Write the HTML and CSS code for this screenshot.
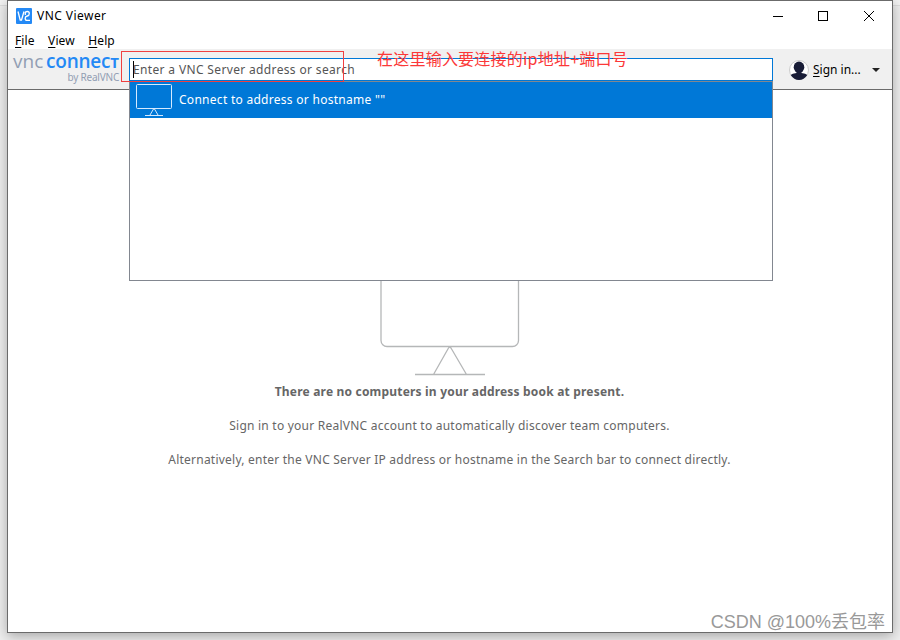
FILE: index.html
```html
<!DOCTYPE html>
<html lang="en">
  <head>
    <meta charset="UTF-8" />
    <title>VNC Viewer</title>
    <link rel="stylesheet" href="styles.css">
  </head>
  <body>
    <div class="window">
      <header class="titlebar">
        <svg class="app-icon" width="16" height="16" viewBox="0 0 16 16">
          <rect width="16" height="16" rx="1" fill="#2489f5" />
          <path d="M2 3.5L4.2 12H5.5L8 3.5M9.3 7V5Q9.3 3.5 11.3 3.5Q13.3 3.5 13.3 5.5Q13.3 7.5 11.3 8Q9.2 8.5 9.2 10.2Q9.2 12.4 11.2 12.4H14" fill="none" stroke="#fff" stroke-width="1.3" />
        </svg>
        <span class="title">VNC Viewer</span>
        <svg class="controls" width="104" height="12" viewBox="0 0 104 12" fill="none" stroke="#000">
          <path d="M0 6.5H10" />
          <rect x="45.5" y="1.5" width="9" height="9" />
          <path d="M91 1L101 11M101 1L91 11" />
        </svg>
      </header>
      <nav class="menu">
        <span class="file"><u>F</u>ile</span>
        <span class="view"><u>V</u>iew</span>
        <span class="help"><u>H</u>elp</span>
      </nav>

      <div class="toolbar">
        <div class="logo">
          <div class="brand"><span class="vnc">vnc</span><span class="connect">connec<span class="cap">T</span></span></div>
          <div class="by">by RealVNC</div>
        </div>
        <div class="search">
          <div class="field"><span class="caret"></span><span class="placeholder">Enter a VNC Server address or search</span></div>
          <div class="dropdown">
            <div class="option">
              <svg width="38" height="34" viewBox="0 0 38 34" fill="none" stroke="#d5eaff">
                <rect x="1.5" y="1.5" width="35" height="24" rx="1" />
                <path d="M15 32L18.5 26H19.5L23 32M10 32.5H28" />
              </svg>
              <span class="option-text">Connect to address or hostname ""</span>
            </div>
          </div>
          <div class="highlight"></div>
          <div class="note">在这里输入要连接的ip地址+端口号</div>
        </div>
        <div class="account">
          <svg width="20" height="20" viewBox="0 0 20 20">
            <circle cx="10" cy="10" r="9.5" fill="#fff" stroke="#ccc" />
            <ellipse cx="10" cy="7.2" rx="5.3" ry="5.7" fill="#181c36" />
            <path d="M7.5 11H12.5V13Q17 13.5 18.3 15Q15 20 10 20T1.7 15Q3 13.5 7.5 13Z" fill="#181c36" />
          </svg>
          <span class="signin"><u>S</u>ign in...</span>
          <svg class="arrow" width="8" height="4" viewBox="0 0 8 4"><path d="M0 0H8L4 4Z" fill="#222" /></svg>
        </div>
      </div>

      <main class="content">
        <svg width="140" height="106" viewBox="0 0 140 106" fill="none" stroke="#b5b7b8" stroke-width="1.3">
          <rect x="1" y="1" width="137.5" height="75.5" rx="6" />
          <path d="M53.5 104.5L68.5 78Q69.5 76 71 78L86.5 104.5M35 104.5H105" />
        </svg>
        <p class="empty">There are no computers in your address book at present.</p>
        <p class="line-team">Sign in to your RealVNC account to automatically discover team computers.</p>
        <p class="line-direct">Alternatively, enter the VNC Server IP address or hostname in the Search bar to connect directly.</p>
      </main>
    </div>
    <div class="watermark">CSDN @100%丢包率</div>
  </body>
</html>
```
FILE: styles.css
```css
* {
  box-sizing: border-box;
}

body {
  margin: 0;
  height: 640px;
  overflow: hidden;
  background: linear-gradient(#f3f3f3 5px, #ddd 5px, #ddd 6px, #eee 6px);
  font-family: "Noto Sans", "Noto Sans CJK SC", sans-serif;
  font-size: 12px;
  line-height: 18px;
  color: #000;
}

.window {
  display: flex;
  flex-direction: column;
  width: 886px;
  height: 633px;
  margin-left: 7px;
  background: #fff;
  border: 1px solid #6b6b6b;
  box-shadow: 0 3px 12px rgba(0, 0, 0, 0.3);
}

.titlebar {
  display: flex;
  align-items: center;
  height: 29px;
  padding: 0 15px 0 8px;
}

.title {
  margin-left: 5px;
  letter-spacing: 0.45px;
}

.controls {
  margin-left: auto;
}

.menu {
  display: flex;
  gap: 13.5px;
  height: 19px;
  padding: 2px 7px 0;
  letter-spacing: 0.1px;
}

u {
  text-underline-offset: 2px;
}

.toolbar {
  display: flex;
  height: 41px;
  background: #f0f0f0;
  border-bottom: 1px solid #6b6b6b;
}

.logo {
  width: 121px;
  padding: 2px 0 0 5px;
  white-space: nowrap;
}

.brand {
  height: 20px;
  font-family: "Open Sans", sans-serif;
  font-size: 19px;
  line-height: 20px;
}

.vnc {
  display: inline-block;
  width: 33px;
  color: #929eb3;
}

.connect {
  color: #2489f5;
  font-weight: 600;
  letter-spacing: -0.2px;
}

.cap {
  font-size: 15px;
  font-weight: 700;
}

.by {
  width: 106px;
  height: 12px;
  font-size: 10px;
  line-height: 12px;
  text-align: right;
  letter-spacing: -0.2px;
  color: #929eb3;
}

.search {
  position: relative;
  z-index: 1;
  width: 644px;
  margin-top: 9px;
}

.field {
  display: flex;
  align-items: center;
  height: 23px;
  padding-left: 3px;
  background: #fff;
  border: 1px solid #0078d7;
  color: #555;
}

.caret {
  width: 1px;
  height: 17px;
  margin-right: -1px;
  background: #000;
}

.placeholder {
  letter-spacing: 0.35px;
}

.dropdown {
  position: absolute;
  top: 23px;
  left: 0;
  width: 644px;
  height: 200px;
  background: #fff;
  border: 1px solid #828790;
}

.option {
  display: flex;
  align-items: center;
  height: 36px;
  padding-left: 5px;
  background: #0078d7;
  color: #fff;
}

.option-text {
  margin-left: 6px;
  letter-spacing: 0.28px;
}

.highlight {
  position: absolute;
  top: -7px;
  left: -8px;
  width: 223px;
  height: 31px;
  border: 1px solid #f04040;
}

.note {
  position: absolute;
  top: -10px;
  left: 248px;
  font-family: "Noto Sans CJK SC", sans-serif;
  font-size: 16px;
  line-height: 20px;
  letter-spacing: 0.22px;
  white-space: nowrap;
  color: #fb3838;
}

.account {
  display: flex;
  align-items: center;
  margin-left: 16px;
  padding-top: 1px;
}

.signin {
  width: 59px;
  margin-left: 4px;
}

.content {
  display: flex;
  flex-direction: column;
  align-items: center;
  padding-top: 180px;
  color: #666;
}

.content p {
  margin: 0 1px 16px 0;
  letter-spacing: 0.23px;
  white-space: nowrap;
}

.content .empty {
  margin-top: 7px;
  font-weight: 700;
  letter-spacing: 0.19px;
}

.watermark {
  position: absolute;
  right: 15px;
  bottom: 6px;
  font-family: "Liberation Sans", "Noto Sans CJK SC", sans-serif;
  font-size: 18px;
  line-height: 24px;
  white-space: nowrap;
  color: #999;
}
```
